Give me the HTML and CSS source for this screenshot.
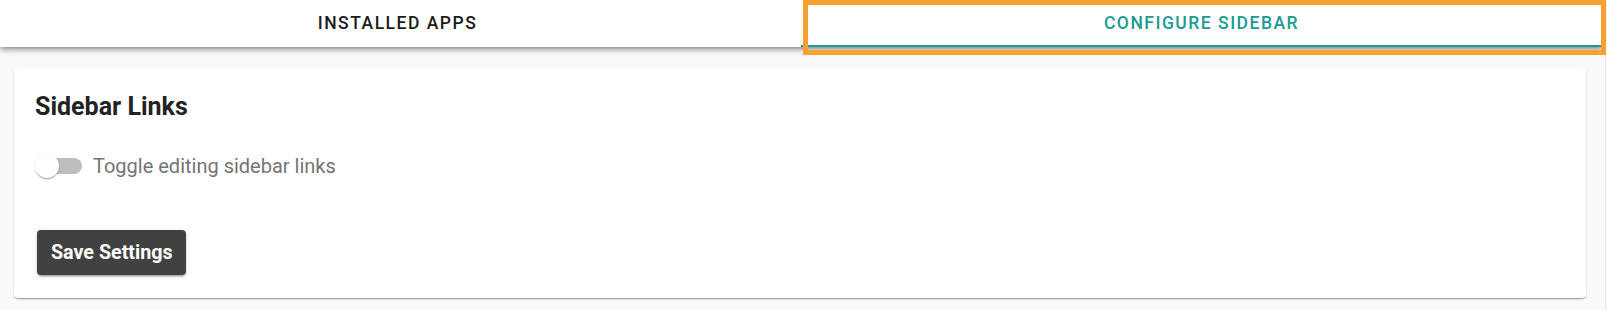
FILE: index.html
```html
<!DOCTYPE html>
<html lang="en">
<head>
<meta charset="utf-8">
<title>Configure Sidebar</title>
<link rel="stylesheet" href="styles.css">
</head>
<body>
<div class="page">
  <div class="main">
    <nav class="tabbar">
      <div class="tab tab-first">INSTALLED APPS</div>
      <div class="tab tab-active">CONFIGURE SIDEBAR<span class="highlight"></span></div>
    </nav>
    <div class="content">
      <section class="card">
        <h2 class="card-title">Sidebar Links</h2>
        <label class="toggle-row">
          <span class="switch"><span class="track"></span><span class="thumb"></span></span>
          <span class="toggle-label">Toggle editing sidebar links</span>
        </label>
        <button class="btn">Save Settings</button>
      </section>
    </div>
  </div>
  <div class="scroll-edge"></div>
</div>
</body>
</html>
```

FILE: styles.css
```css
* { box-sizing: border-box; }
html, body { margin: 0; padding: 0; }
body {
  background: #fafafa;
  font-family: Roboto, "Liberation Sans", Arial, sans-serif;
  width: 1607px;
  height: 310px;
  overflow: hidden;
}
.page {
  display: flex;
  height: 310px;
}
.main {
  width: 1602px;
  flex: none;
}
.scroll-edge {
  width: 5px;
  border-right: 1px solid #e6e6e6;
  margin-top: 55px;
  margin-right: 1px;
}
.tabbar {
  display: flex;
  height: 47px;
  background: #fff;
  position: relative;
  z-index: 1;
  box-shadow: 0 2px 4px -1px rgba(0,0,0,.3), 0 4px 5px 0 rgba(0,0,0,.16), 0 1px 10px 0 rgba(0,0,0,.12);
}
.tab {
  flex: 0 0 50%;
  display: flex;
  align-items: center;
  justify-content: center;
  font-size: 17.5px;
  font-weight: 500;
  letter-spacing: 1.5px;
  color: #1b1b1b;
  padding-bottom: 2px;
  position: relative;
}
.tab-first {
  padding-right: 6px;
}
.tab-active {
  color: #1a9b94;
  border-bottom: 2px solid #1a9b94;
  padding-bottom: 0;
}
.highlight {
  position: absolute;
  left: 2px;
  right: -4px;
  top: 0;
  height: 55px;
  border: 5px solid #f9a033;
  pointer-events: none;
}
.content {
  padding: 20px 16px 0 14px;
}
.card {
  background: #fff;
  border-radius: 4px;
  box-shadow: 0 2px 1px -1px rgba(0,0,0,.2), 0 1px 1px 0 rgba(0,0,0,.14), 0 1px 3px 0 rgba(0,0,0,.12);
  padding: 25px 21px 23px;
  height: 231px;
}
.card-title {
  margin: 0;
  font-size: 25px;
  line-height: 30px;
  font-weight: 700;
  color: #222;
}
.toggle-row {
  display: flex;
  align-items: center;
  height: 44px;
  margin-top: 22px;
  gap: 11px;
}
.switch {
  position: relative;
  width: 47px;
  height: 24px;
  flex: none;
}
.track {
  position: absolute;
  left: 8px;
  right: 0;
  top: 4px;
  height: 16px;
  border-radius: 8px;
  background: #bdbdbd;
}
.thumb {
  position: absolute;
  left: 0;
  top: 0;
  width: 24px;
  height: 24px;
  border-radius: 50%;
  background: #fff;
  box-shadow: 0 2px 1px -1px rgba(0,0,0,.2), 0 1px 1px 0 rgba(0,0,0,.14), 0 1px 3px 0 rgba(0,0,0,.12);
}
.toggle-label {
  font-size: 20px;
  color: #757575;
}
.btn {
  display: block;
  margin-top: 42px;
  margin-left: 2px;
  height: 45px;
  padding: 0 13px 0 14px;
  border: none;
  border-radius: 4px;
  background: #414141;
  color: #fff;
  font-family: Roboto, "Liberation Sans", Arial, sans-serif;
  font-size: 19.7px;
  font-weight: 700;
  box-shadow: 0 3px 1px -2px rgba(0,0,0,.2), 0 2px 2px 0 rgba(0,0,0,.14), 0 1px 5px 0 rgba(0,0,0,.12);
}
```
